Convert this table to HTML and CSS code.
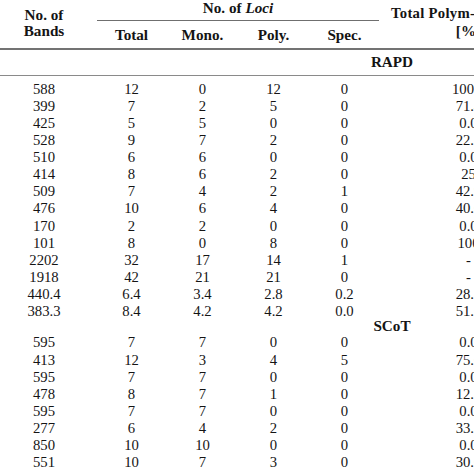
FILE: index.html
```html
<!DOCTYPE html>
<html lang="en">
<head>
<meta charset="utf-8">
<title>Loci table</title>
<link rel="stylesheet" href="styles.css">
</head>
<body>
<div class="sheet">
  <div class="head">
    <div class="h bands">No. of<br>Bands</div>
    <div class="h loci">No. of <i>Loci</i></div>
    <div class="h sub">Total</div>
    <div class="h sub">Mono.</div>
    <div class="h sub">Poly.</div>
    <div class="h sub">Spec.</div>
    <div class="h polyh"><span class="l1">Total Polym-&#8203;orphism</span><span class="l2">[%]</span></div>
  </div>

  <div class="group">RAPD</div>
  <div class="rows">
    <div class="row"><span>588</span><span>12</span><span>0</span><span>12</span><span>0</span><span>100.0</span></div>
    <div class="row"><span>399</span><span>7</span><span>2</span><span>5</span><span>0</span><span>71.4</span></div>
    <div class="row"><span>425</span><span>5</span><span>5</span><span>0</span><span>0</span><span>0.0</span></div>
    <div class="row"><span>528</span><span>9</span><span>7</span><span>2</span><span>0</span><span>22.2</span></div>
    <div class="row"><span>510</span><span>6</span><span>6</span><span>0</span><span>0</span><span>0.0</span></div>
    <div class="row"><span>414</span><span>8</span><span>6</span><span>2</span><span>0</span><span>25</span></div>
    <div class="row"><span>509</span><span>7</span><span>4</span><span>2</span><span>1</span><span>42.9</span></div>
    <div class="row"><span>476</span><span>10</span><span>6</span><span>4</span><span>0</span><span>40.0</span></div>
    <div class="row"><span>170</span><span>2</span><span>2</span><span>0</span><span>0</span><span>0.0</span></div>
    <div class="row"><span>101</span><span>8</span><span>0</span><span>8</span><span>0</span><span>100</span></div>
    <div class="row"><span>2202</span><span>32</span><span>17</span><span>14</span><span>1</span><span>-</span></div>
    <div class="row"><span>1918</span><span>42</span><span>21</span><span>21</span><span>0</span><span>-</span></div>
    <div class="row"><span>440.4</span><span>6.4</span><span>3.4</span><span>2.8</span><span>0.2</span><span>28.6</span></div>
    <div class="row"><span>383.3</span><span>8.4</span><span>4.2</span><span>4.2</span><span>0.0</span><span>51.2</span></div>
  </div>
  <div class="group inline">SCoT</div>
  <div class="rows plain">
    <div class="row"><span>595</span><span>7</span><span>7</span><span>0</span><span>0</span><span>0.0</span></div>
    <div class="row"><span>413</span><span>12</span><span>3</span><span>4</span><span>5</span><span>75.0</span></div>
    <div class="row"><span>595</span><span>7</span><span>7</span><span>0</span><span>0</span><span>0.0</span></div>
    <div class="row"><span>478</span><span>8</span><span>7</span><span>1</span><span>0</span><span>12.5</span></div>
    <div class="row"><span>595</span><span>7</span><span>7</span><span>0</span><span>0</span><span>0.0</span></div>
    <div class="row"><span>277</span><span>6</span><span>4</span><span>2</span><span>0</span><span>33.3</span></div>
    <div class="row"><span>850</span><span>10</span><span>10</span><span>0</span><span>0</span><span>0.0</span></div>
    <div class="row"><span>551</span><span>10</span><span>7</span><span>3</span><span>0</span><span>30.0</span></div>
  </div>
</div>
</body>
</html>
```

FILE: styles.css
```css
html, body {
  margin: 0;
  padding: 0;
  overflow: hidden;
  background: #ffffff;
}

.sheet {
  width: 557px;
  font-family: "Liberation Serif", "Times New Roman", serif;
  font-size: 14.7px;
  color: #141414;
  --cols: 96px 71px 71px 71px 71px 177px;
}

.head {
  display: grid;
  grid-template-columns: var(--cols);
  grid-template-rows: auto auto;
  border-bottom: 2px solid #737373;
  line-height: 16px;
}

.h {
  font-weight: bold;
  font-size: 15.2px;
  text-align: center;
}

.bands {
  grid-column: 1;
  grid-row: 1 / 3;
  align-self: center;
  padding-right: 8px;
  padding-bottom: 3px;
}

.loci {
  grid-column: 2 / 6;
  grid-row: 1;
  padding-bottom: 4px;
  margin: 0 1px;
  border-bottom: 1px solid #6f6f6f;
}

.sub {
  grid-row: 2;
  padding-top: 5.5px;
  padding-bottom: 5.5px;
}

.polyh {
  grid-column: 6;
  grid-row: 1 / 3;
  align-self: center;
  display: flex;
  flex-direction: column;
  padding-bottom: 5px;
  line-height: 17px;
}

.polyh .l1 {
  text-align: left;
  padding-left: 11px;
  font-size: 14.7px;
  letter-spacing: 0.3px;
  white-space: nowrap;
}

.polyh .l2 {
  text-align: center;
}

.group {
  box-sizing: border-box;
  padding: 3.5px 0 5.5px 227px;
  text-align: center;
  font-weight: bold;
  font-size: 15.2px;
  line-height: 16px;
  border-bottom: 1px solid #8a8a8a;
}

.group.inline {
  border-bottom: none;
  padding: 0 0 2px 227px;
  line-height: 12px;
}

.rows {
  padding-top: 4.5px;
}

.rows.plain {
  padding-top: 0;
}

.row {
  display: grid;
  grid-template-columns: var(--cols);
  line-height: 17.14px;
  text-align: center;
  white-space: nowrap;
}

.row span:first-child {
  padding-right: 8px;
}
```
